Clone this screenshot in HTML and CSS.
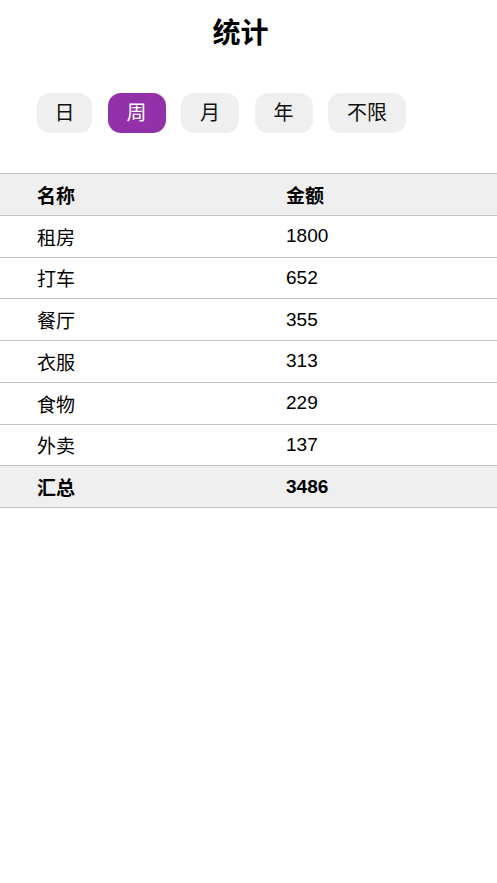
FILE: index.html
```html
<!DOCTYPE html>
<html lang="zh">
<head>
<meta charset="utf-8">
<title>统计</title>
<link rel="stylesheet" href="styles.css">
</head>
<body>
<div class="page">
  <h1 class="title">统计</h1>
  <div class="tabs">
    <span class="tab narrow">日</span>
    <span class="tab active">周</span>
    <span class="tab">月</span>
    <span class="tab">年</span>
    <span class="tab">不限</span>
  </div>
  <div class="table">
    <div class="row head"><span class="name">名称</span><span class="amt">金额</span></div>
    <div class="row"><span class="name">租房</span><span class="amt">1800</span></div>
    <div class="row"><span class="name">打车</span><span class="amt">652</span></div>
    <div class="row"><span class="name">餐厅</span><span class="amt">355</span></div>
    <div class="row"><span class="name">衣服</span><span class="amt">313</span></div>
    <div class="row"><span class="name">食物</span><span class="amt">229</span></div>
    <div class="row"><span class="name">外卖</span><span class="amt">137</span></div>
    <div class="row head"><span class="name">汇总</span><span class="amt">3486</span></div>
  </div>
</div>
</body>
</html>
```

FILE: styles.css
```css
* { box-sizing: border-box; }
html, body { margin: 0; padding: 0; background: #fff; }
body {
  font-family: "Liberation Sans", "Noto Sans CJK SC", sans-serif;
  color: #000;
}
.page { width: 497px; }
.title {
  margin: 0;
  padding-top: 15px;
  padding-right: 16px;
  height: 93px;
  text-align: center;
  font-size: 28px;
  font-weight: bold;
  line-height: 38px;
}
.tabs {
  display: flex;
  gap: 15.5px;
  padding-left: 37px;
  height: 80px;
}
.tab {
  height: 40px;
  padding: 0 19px;
  border-radius: 13px;
  background: #efefef;
  font-size: 20px;
  line-height: 40px;
  color: #111;
}
.tab.narrow { padding: 0 17.5px; }
.tab.active {
  background: #9331ab;
  color: #fff;
}
.table {
  border-top: 1px solid #c4c4c4;
}
.row {
  display: flex;
  align-items: center;
  height: 41.75px;
  border-bottom: 1px solid #c4c4c4;
  font-size: 19px;
  padding-left: 37px;
}
.row.head {
  background: #efefef;
  font-weight: bold;
}
.name { width: 249px; }
```
